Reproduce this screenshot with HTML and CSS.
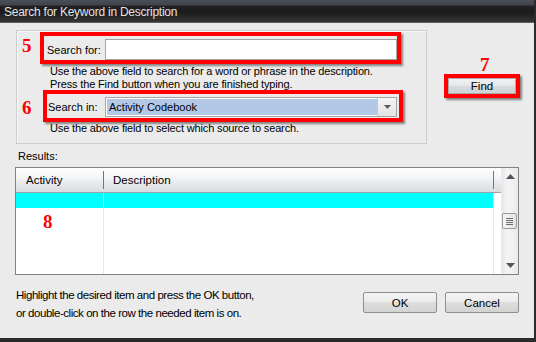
FILE: index.html
```html
<!DOCTYPE html>
<html>
<head>
<meta charset="utf-8">
<link rel="stylesheet" href="styles.css">
</head>
<body>
<div class="window">
  <div class="titlebar">Search for Keyword in Description</div>
  <div class="client">
    <div class="top">
      <div class="group">
        <div class="row row1">
          <span class="num num5">5</span>
          <div class="annot annot1">
            <span class="lbl lbl1">Search for:</span>
            <div class="textbox"></div>
          </div>
        </div>
        <p class="help help1">Use the above field to search for a word or phrase in the description.<br>Press the Find button when you are finished typing.</p>
        <div class="row row2">
          <span class="num num6">6</span>
          <div class="annot annot2">
            <span class="lbl lbl2">Search in:</span>
            <div class="combo">
              <span class="combo-value">Activity Codebook</span>
              <span class="combo-btn"><svg width="7" height="4" viewBox="0 0 7 4"><path d="M0 0H7L3.5 4Z" fill="#5a5a5a"/></svg></span>
            </div>
          </div>
        </div>
        <p class="help help2">Use the above field to select which source to search.</p>
      </div>
      <div class="findcol">
        <span class="num num7">7</span>
        <div class="annot annot3"><div class="btn find">Find</div></div>
      </div>
    </div>
    <div class="results-label">Results:</div>
    <div class="list">
      <div class="list-main">
        <div class="list-header">
          <div class="hcol h1">Activity</div>
          <div class="hcol h2">Description</div>
          <div class="hcol h3"></div>
        </div>
        <div class="list-body">
          <div class="col col1"><div class="cell sel"></div><span class="num num8">8</span></div>
          <div class="col col2"><div class="cell sel"></div></div>
          <div class="col col3"></div>
        </div>
      </div>
      <div class="vscroll">
        <div class="sb-btn"><svg width="9" height="5" viewBox="0 0 9 5"><path d="M0 5H9L4.5 0Z" fill="#4f5560"/></svg></div>
        <div class="sb-track">
          <div class="sb-thumb"><span></span><span></span><span></span><span></span></div>
        </div>
        <div class="sb-btn"><svg width="9" height="5" viewBox="0 0 9 5"><path d="M0 0H9L4.5 5Z" fill="#4f5560"/></svg></div>
      </div>
    </div>
    <div class="footer">
      <p class="footer-text">Highlight the desired item and press the OK button,<br>or double-click on the row the needed item is on.</p>
      <div class="buttons">
        <div class="btn dlg">OK</div>
        <div class="btn dlg">Cancel</div>
      </div>
    </div>
  </div>
</div>
</body>
</html>
```
FILE: styles.css
```css
* { box-sizing: border-box; }
html, body { margin: 0; padding: 0; }
body {
  width: 536px;
  height: 342px;
  overflow: hidden;
  font-family: "Liberation Sans", Arial, sans-serif;
  font-size: 11px;
  color: #000;
  background: #ebebeb;
}
p { margin: 0; }
.window {
  width: 536px;
  height: 342px;
  display: flex;
  flex-direction: column;
}
.titlebar {
  height: 23px;
  flex: none;
  padding-left: 4px;
  line-height: 24px;
  font-size: 12px;
  letter-spacing: -0.25px;
  color: #e2e2e2;
  background: linear-gradient(#4a4e58 0, #40444d 5px, #222 6px, #1b1b1b 12px, #333 21px, #3a3a3a 22px, #5e5e5e 22px, #5e5e5e 23px);
  border-right: 2px solid #2b2b2b;
}
.client {
  flex: 1;
  background: #ebebeb;
  border-right: 2px solid #2b2b2b;
  border-bottom: 4px solid #2b2b2b;
  display: flex;
  flex-direction: column;
}
.top {
  display: flex;
  margin-top: 7px;
  padding-left: 16px;
}
.group {
  width: 411px;
  height: 114px;
  border: 1px solid #cdcdcd;
  box-shadow: inset 1px 1px 0 #f8f8f8;
}
.row { display: flex; align-items: flex-start; }
.row1 { margin-top: 1px; }
.row2 { margin-top: -1px; }
.num {
  font-family: "Liberation Serif", "Times New Roman", serif;
  font-weight: bold;
  font-size: 19px;
  line-height: 19px;
  color: #ff0000;
  display: block;
}
.num5 { width: 23px; padding-left: 5px; padding-top: 4px; }
.num6 { width: 26px; padding-left: 5px; padding-top: 8px; }
.annot {
  border: 4px solid #ff0000;
  box-shadow: 2px 2px 2px rgba(0,0,0,0.45);
  display: flex;
  align-items: flex-end;
}
.annot1 { width: 361px; height: 32px; }
.annot2 { width: 360px; height: 32px; }
.lbl { line-height: 13px; }
.lbl1 { padding-left: 3px; margin-bottom: 3px; width: 61px; }
.lbl2 { padding-left: 1px; margin-bottom: 4px; width: 58px; }
.textbox {
  width: 292px;
  height: 21px;
  background: #fff;
  border: 1px solid #a3a3a3;
}
.combo {
  width: 292px;
  height: 20px;
  margin-bottom: 1px;
  border: 1px solid #a5a5a5;
  background: #fff;
  display: flex;
  padding: 1px 0 1px 1px;
}
.combo-value {
  flex: 1;
  background: #b3c7e7;
  padding-left: 2px;
  line-height: 16px;
  font-size: 11px;
}
.combo-btn {
  width: 19px;
  margin-top: -1px;
  margin-bottom: -1px;
  border-left: 1px solid #c8c8c8;
  background: linear-gradient(#f3f3f3, #e4e4e4);
  display: flex;
  align-items: center;
  justify-content: center;
}
.help {
  margin-left: 33px;
  line-height: 13px;
  font-size: 11px;
  letter-spacing: -0.15px;
}
.help1 { margin-top: 1px; }
.findcol {
  margin-left: 17px;
  display: flex;
  flex-direction: column;
}
.num7 { margin-top: 25px; padding-left: 36px; }
.annot3 { width: 76px; height: 24px; }
.btn {
  border: 1px solid #8e8f8f;
  border-radius: 2px;
  background: linear-gradient(#f4f4f4 0%, #ececec 45%, #dedede 50%, #d3d3d3 100%);
  display: flex;
  align-items: center;
  justify-content: center;
  font-size: 11.5px;
}
.find {
  width: 100%;
  height: 100%;
  border-color: #a8acae;
  border-radius: 0;
  background: linear-gradient(#eef0f1 0%, #e6e8ea 45%, #d6dadd 55%, #cdd2d5 100%);
}
.results-label {
  margin-top: 6px;
  padding-left: 18px;
  line-height: 13px;
}
.list {
  margin-top: 4px;
  margin-left: 15px;
  width: 504px;
  height: 108px;
  border: 1px solid #828282;
  background: #fff;
  display: flex;
}
.list-main { flex: 1; display: flex; flex-direction: column; }
.list-header {
  height: 25px;
  display: flex;
  border-bottom: 1px solid #a0a3a8;
  background: linear-gradient(#ffffff 0%, #f4f5f6 40%, #e4e6e9 70%, #d9dbdf 100%);
}
.hcol { line-height: 24px; font-size: 11.5px; position: relative; }
.h1 { width: 88px; padding-left: 10px; }
.h2 { width: 390px; padding-left: 9px; }
.h3 { flex: 1; }
.h1::after, .h2::after {
  content: "";
  position: absolute;
  right: 0;
  top: 3px;
  height: 18px;
  width: 1px;
  background: #6c7588;
}
.list-body { flex: 1; display: flex; }
.col { height: 100%; }
.col1 { width: 88px; border-right: 1px solid #e8e8e8; }
.col2 { width: 390px; border-right: 1px solid #e8e8e8; }
.col3 { flex: 1; }
.cell.sel { height: 15px; background: #00ffff; }
.num8 { margin-top: 4px; padding-left: 27px; }
.vscroll {
  width: 17px;
  display: flex;
  flex-direction: column;
  background: linear-gradient(90deg, #e6e6e6 0%, #f4f4f4 30%, #f0f0f0 70%, #e8e8e8 100%);
  border-left: 1px solid #ececec;
}
.sb-btn {
  height: 17px;
  display: flex;
  align-items: center;
  justify-content: center;
}
.sb-track { flex: 1; }
.sb-thumb {
  margin-top: 28px;
  width: 15px;
  height: 16px;
  border: 1px solid #9b9b9b;
  border-radius: 2px;
  background: linear-gradient(90deg, #f6f6f6, #e2e2e2);
  display: flex;
  flex-direction: column;
  align-items: center;
  justify-content: center;
  gap: 1px;
}
.sb-thumb span {
  width: 7px;
  height: 1px;
  background: #6d6d6d;
}
.footer {
  display: flex;
  justify-content: space-between;
  margin-top: 11px;
  padding-left: 16px;
  padding-right: 15px;
}
.footer-text { line-height: 18px; font-size: 11.5px; letter-spacing: -0.45px; }
.buttons { display: flex; gap: 8px; margin-top: 6px; }
.dlg { width: 74px; height: 21px; }
```
